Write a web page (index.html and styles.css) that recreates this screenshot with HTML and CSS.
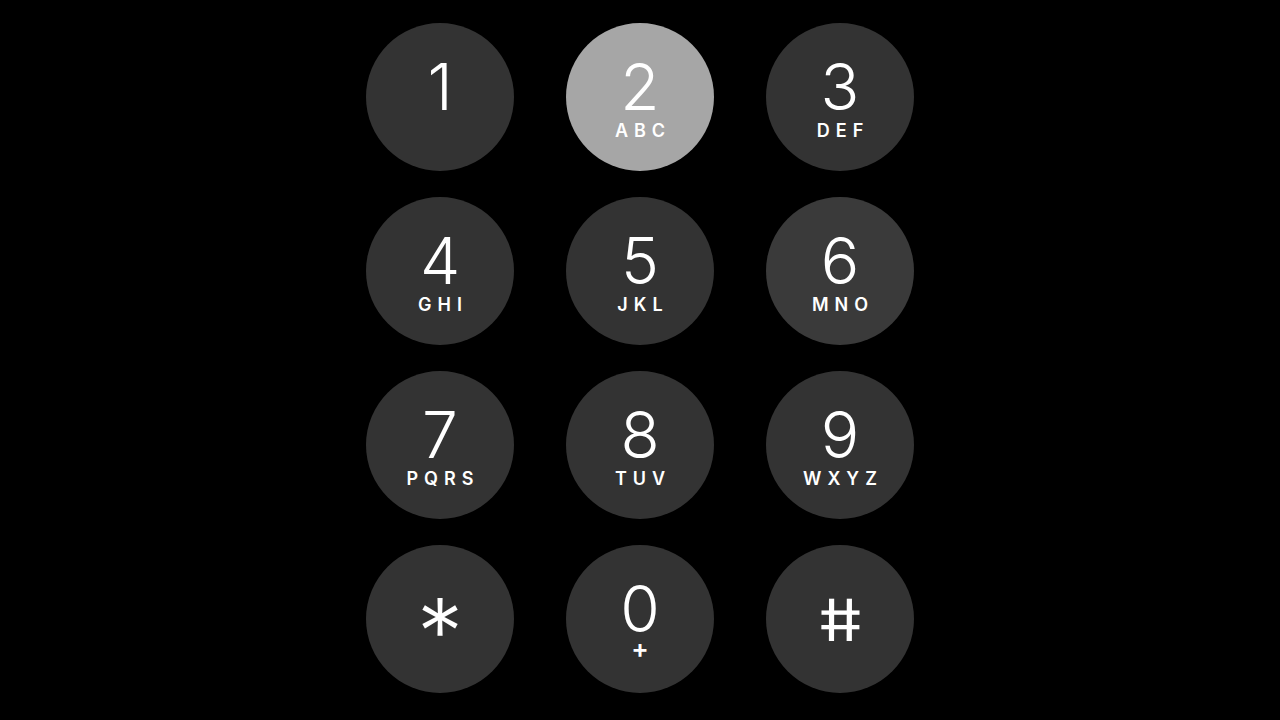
FILE: index.html
```html
<!DOCTYPE html>
<html>
<head>
  <meta charset="UTF-8">
  <title>Keypad</title>
  <link rel="stylesheet" href="styles.css">
</head>
<body>
  <div class="keypad">
    <div class="key"><span class="digit">1</span></div>
    <div class="key pressed"><span class="digit">2</span><span class="letters">ABC</span></div>
    <div class="key"><span class="digit">3</span><span class="letters">DEF</span></div>

    <div class="key"><span class="digit">4</span><span class="letters">GHI</span></div>
    <div class="key"><span class="digit">5</span><span class="letters">JKL</span></div>
    <div class="key fading"><span class="digit">6</span><span class="letters">MNO</span></div>

    <div class="key"><span class="digit">7</span><span class="letters">PQRS</span></div>
    <div class="key"><span class="digit">8</span><span class="letters">TUV</span></div>
    <div class="key"><span class="digit">9</span><span class="letters">WXYZ</span></div>

    <div class="key symbol"><span class="star">*</span></div>
    <div class="key"><span class="digit">0</span><span class="plus">+</span></div>
    <div class="key symbol"><span class="hash">#</span></div>
  </div>
</body>
</html>
```

FILE: styles.css
```css
html, body {
  margin: 0;
  background-color: #000000;
  height: 100%;
}
body {
  font-family: Inter, 'Noto Sans', sans-serif;
  color: #ffffff;
  overflow: hidden;
}
.keypad {
  display: grid;
  grid-template-columns: repeat(3, 148px);
  grid-auto-rows: 148px;
  column-gap: 52px;
  row-gap: 26px;
  justify-content: center;
  padding-top: 23px;
}
.key {
  border-radius: 50%;
  background-color: #333333;
  display: flex;
  flex-direction: column;
  align-items: center;
  padding-top: 38px;
  box-sizing: border-box;
}
.key.pressed {
  background-color: #a6a6a6;
}
.key.fading {
  background-color: #3a3a3a;
}
.key.symbol {
  padding-top: 0;
  justify-content: center;
}
.digit {
  font-size: 64px;
  font-weight: 300;
  line-height: 52px;
}
.letters {
  font-size: 18px;
  font-weight: 600;
  line-height: 18px;
  letter-spacing: 6px;
  padding-left: 6px;
  margin-top: 9px;
}
.plus {
  font-size: 26px;
  font-weight: 600;
  line-height: 20px;
  margin-top: 4px;
}
.star {
  font-size: 92px;
  font-weight: 300;
  line-height: 40px;
  height: 40px;
  margin-top: 26px;
}
.hash {
  display: inline-block;
  font-size: 58px;
  font-weight: 400;
  line-height: 46px;
  margin-top: 2px;
  transform: skewX(11deg) scaleX(1.2);
}
```
